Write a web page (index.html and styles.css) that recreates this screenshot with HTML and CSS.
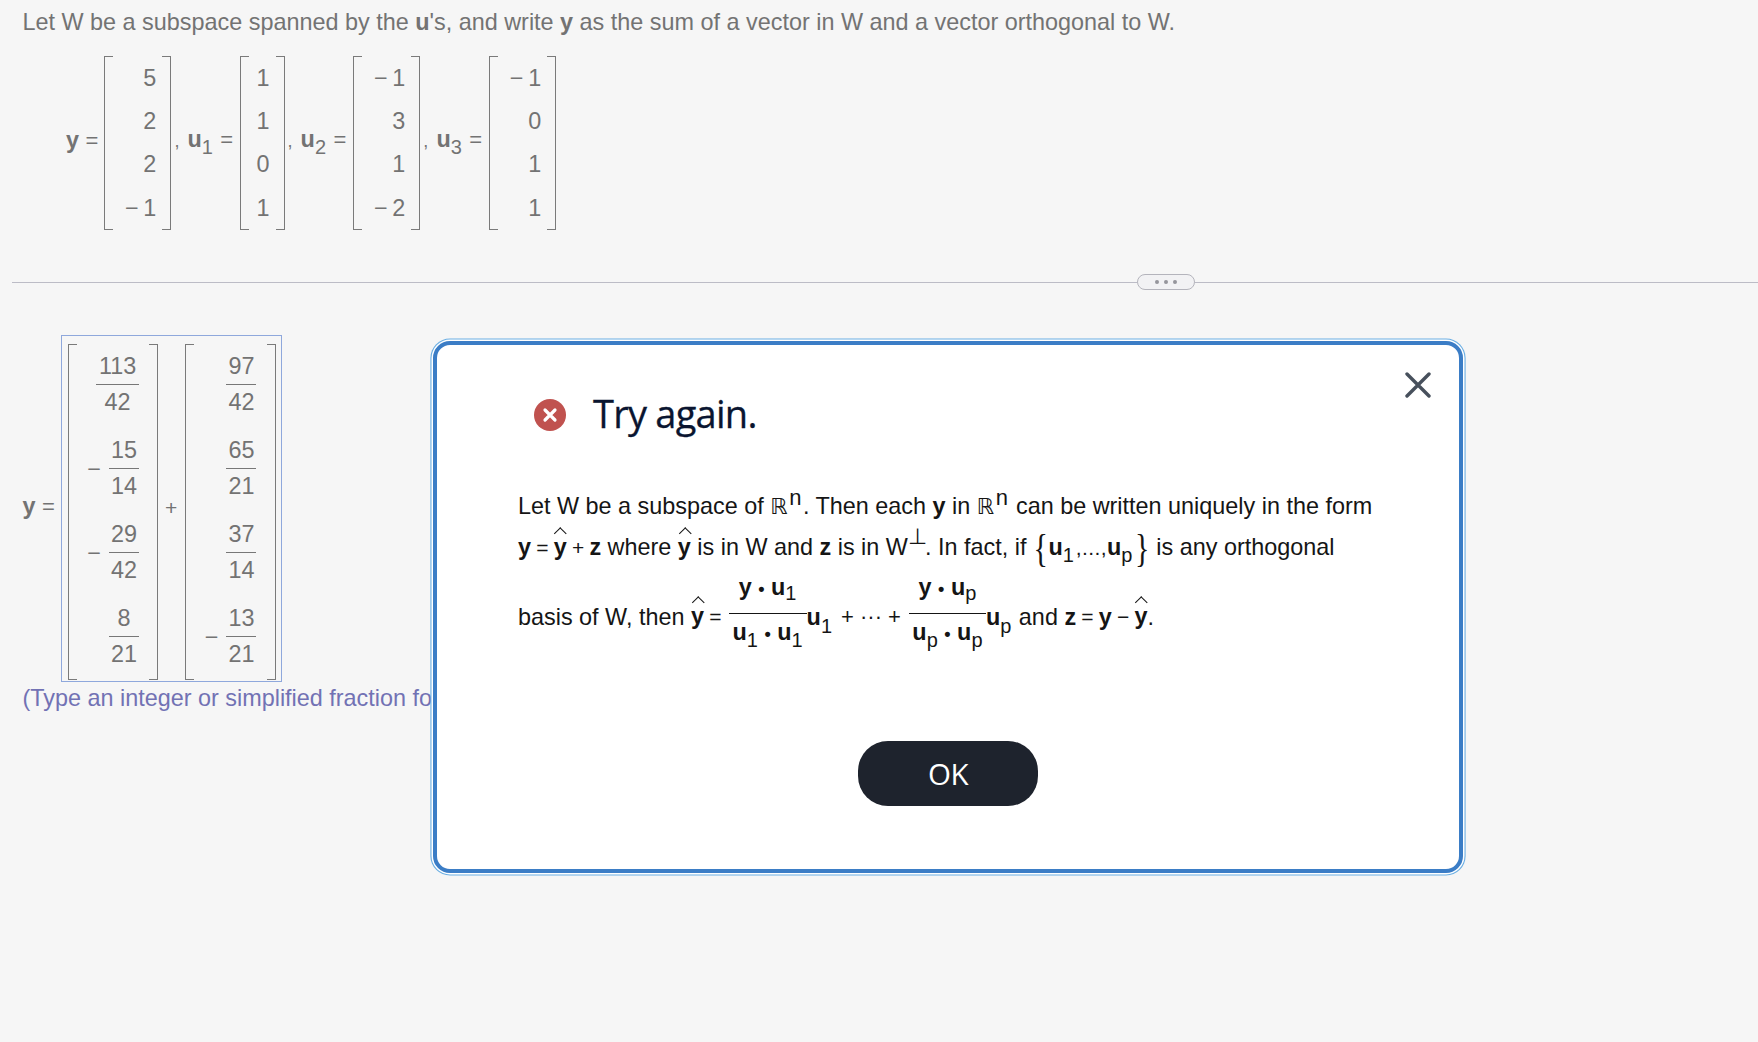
FILE: index.html
```html
<!DOCTYPE html>
<html lang="en">
<head>
<meta charset="utf-8">
<title>Try again</title>
<link rel="stylesheet" href="styles.css">
</head>
<body>
<main class="page">
  <p class="intro">Let W be a subspace spanned by the <b>u</b>'s, and write <b>y</b> as the sum of a vector in W and a vector orthogonal to W.</p>

  <div class="vectors">
    <span class="label lbl-y"><b>y</b> <span class="eq">=</span></span>
    <div class="matrix m-wide">
      <span>5</span><span>2</span><span>2</span><span>−&#8201;1</span>
    </div>
    <span class="label lbl-u"><span class="comma">,</span><span class="uvar"><b>u</b><span class="sub">1</span></span><span class="eq">=</span></span>
    <div class="matrix m-narrow">
      <span>1</span><span>1</span><span>0</span><span>1</span>
    </div>
    <span class="label lbl-u"><span class="comma">,</span><span class="uvar"><b>u</b><span class="sub">2</span></span><span class="eq">=</span></span>
    <div class="matrix m-wide">
      <span>−&#8201;1</span><span>3</span><span>1</span><span>−&#8201;2</span>
    </div>
    <span class="label lbl-u"><span class="comma">,</span><span class="uvar"><b>u</b><span class="sub">3</span></span><span class="eq">=</span></span>
    <div class="matrix m-wide">
      <span>−&#8201;1</span><span>0</span><span>1</span><span>1</span>
    </div>
  </div>

  <div class="rule">
    <span class="rule-line rule-left"></span>
    <span class="pill"><i></i><i></i><i></i></span>
    <span class="rule-line rule-right"></span>
  </div>

  <div class="answer">
    <span class="label answer-label"><b>y</b> <span class="eq">=</span></span>
    <div class="answer-box">
      <div class="fmatrix fm-a">
        <div class="frow"><span class="ffrac wide"><span>113</span><span>42</span></span></div>
        <div class="frow"><span class="fminus">−</span><span class="ffrac"><span>15</span><span>14</span></span></div>
        <div class="frow"><span class="fminus">−</span><span class="ffrac"><span>29</span><span>42</span></span></div>
        <div class="frow"><span class="ffrac"><span>8</span><span>21</span></span></div>
      </div>
      <span class="plus">+</span>
      <div class="fmatrix fm-b">
        <div class="frow"><span class="ffrac"><span>97</span><span>42</span></span></div>
        <div class="frow"><span class="ffrac"><span>65</span><span>21</span></span></div>
        <div class="frow"><span class="ffrac"><span>37</span><span>14</span></span></div>
        <div class="frow"><span class="fminus">−</span><span class="ffrac"><span>13</span><span>21</span></span></div>
      </div>
    </div>
  </div>

  <p class="hint">(Type an integer or simplified fraction for any non-integer numbers.)</p>
</main>

<section class="modal">
  <button class="close" aria-label="Close">
    <svg viewBox="0 0 26 26" width="26" height="26"><path d="M2 2 L24 24 M24 2 L2 24" fill="none" stroke="#47505c" stroke-width="3.4" stroke-linecap="round"/></svg>
  </button>
  <header class="modal-head">
    <svg class="err" viewBox="0 0 32 32" width="32" height="32"><circle cx="16" cy="16" r="16" fill="#c0524f"/><path d="M11 11 L21 21 M21 11 L11 21" fill="none" stroke="#fff" stroke-width="3.2" stroke-linecap="round"/></svg>
    <h1>Try again.</h1>
  </header>
  <div class="modal-body">
    <p class="line l1">Let W be a subspace of <span class="bb">ℝ</span><span class="sup">n</span>. Then each <b>y</b> in <span class="bb">ℝ</span><span class="sup">n</span> can be written uniquely in the form</p>
    <p class="line l2"><b>y</b> <span class="op">=</span> <b class="hat">y</b> <span class="op">+</span> <b>z</b> where <b class="hat">y</b> is in W and <b>z</b> is in W<span class="sup perp">⊥</span>. In fact, if <span class="brace">{</span><b>u</b><span class="sub gap">1</span><span class="tight">,...,</span><b>u</b><span class="sub gap">p</span><span class="brace">}</span> is any orthogonal</p>
    <div class="line l3">basis of W, then <b class="hat">y</b> <span class="op">=</span> <span class="frac"><span class="num"><b>y</b> <b class="dot">•</b> <b>u</b><span class="sub">1</span></span><span class="den"><b>u</b><span class="sub">1</span> <b class="dot">•</b> <b>u</b><span class="sub">1</span></span></span><b>u</b><span class="sub low">1</span> <span class="sum">+ ··· +</span> <span class="frac f2"><span class="num"><b>y</b> <b class="dot">•</b> <b>u</b><span class="sub">p</span></span><span class="den"><b>u</b><span class="sub">p</span> <b class="dot">•</b> <b>u</b><span class="sub">p</span></span></span><b>u</b><span class="sub low">p</span> and <b>z</b> <span class="op">=</span> <b>y</b> <span class="op">−</span> <b class="hat">y</b>.</div>
  </div>
  <div class="modal-foot"><button class="ok">OK</button></div>
</section>
</body>
</html>
```
FILE: styles.css
```css
* { box-sizing: border-box; }
html, body { margin: 0; padding: 0; }
body {
  width: 1758px;
  height: 1042px;
  overflow: hidden;
  position: relative;
  background: #f6f6f6;
  color: #737373;
  font-family: "Liberation Sans", "DejaVu Sans", sans-serif;
  font-size: 23.4px;
  line-height: 26px;
}
.page { display: flex; flex-direction: column; }
p { margin: 0; }

.intro { padding: 9px 0 0 22.5px; }

.eq { font-size: 22px; }
.sub { font-size: 20px; line-height: 0; vertical-align: -7px; }
.comma { font-size: 18px; }
.label { white-space: pre; }

.vectors { display: flex; align-items: center; margin-top: 21px; padding-left: 66px; }
.lbl-y { margin: 0 6px 6px 0; }
.lbl-u { display: flex; align-items: baseline; width: 68.8px; margin-bottom: 6px; padding: 0 7px 0 3px; }
.lbl-u .uvar { margin-left: 8px; }
.lbl-u .eq { margin-left: auto; }

.matrix {
  position: relative;
  display: grid;
  grid-auto-rows: 43.3px;
  height: 174px;
  justify-items: end;
  align-items: center;
  padding-right: 15px;
}
.m-wide { width: 67px; }
.m-narrow { width: 44.4px; padding-right: 15px; }
.matrix::before, .matrix::after,
.fmatrix::before, .fmatrix::after {
  content: "";
  position: absolute;
  top: 0;
  bottom: 0;
  width: 8px;
  border: 1.4px solid #7a7a7a;
}
.matrix::before, .fmatrix::before { left: 0; border-right: 0; }
.matrix::after, .fmatrix::after { right: 0; border-left: 0; }

.rule { display: flex; align-items: center; height: 16px; margin: 44px 0 0 12px; }
.rule-line { height: 1px; background: #bcbcc6; }
.rule-left { width: 1125px; }
.rule-right { flex: 1; }
.pill {
  display: flex;
  align-items: center;
  justify-content: center;
  gap: 5.4px;
  width: 58px;
  height: 16px;
  border: 1px solid #b4b4bc;
  border-radius: 8px;
  background: #f2f2f4;
}
.pill i { width: 3.8px; height: 3.8px; border-radius: 50%; background: #96969c; }

.answer { display: flex; align-items: flex-start; margin-top: 45px; padding-left: 22.5px; }
.answer-label { margin: 158px 0 0 0; width: 38px; }
.answer-box {
  display: flex;
  align-items: center;
  width: 221.5px;
  height: 347px;
  padding: 6px 5px 0 6px;
  border: 1px solid #8fa8dc;
}
.fmatrix { position: relative; display: grid; grid-auto-rows: 84px; height: 336px; flex: none; }
.fm-a { width: 90px; padding-right: 18.6px; }
.fm-b { width: 90.7px; padding-right: 19.3px; }
.plus { width: 27.5px; text-align: center; font-size: 21px; margin-top: -8px; }
.frow { display: flex; align-items: center; justify-content: flex-end; }
.fminus { margin-right: 8px; line-height: 1; }
.ffrac { display: flex; flex-direction: column; align-items: center; width: 30px; margin-top: -3px; }
.ffrac.wide { width: 42.7px; }
.ffrac span { height: 36px; line-height: 36px; }
.ffrac span:last-child { width: 100%; text-align: center; line-height: 34px; border-top: 1px solid #777; }

.hint { margin-top: 3px; padding-left: 22.5px; color: #7272b4; white-space: nowrap; }

.modal {
  position: absolute;
  left: 433px;
  top: 341px;
  width: 1030px;
  height: 532px;
  padding-top: 54px;
  background: #fff;
  color: #151515;
  border: 4px solid #3b7dc6;
  border-radius: 17px;
  box-shadow: 0 0 0 1.5px #fff, 0 0 0 2.6px #6aaee3;
}
.close {
  position: absolute;
  top: 27px;
  right: 28px;
  padding: 0;
  border: 0;
  background: none;
  line-height: 0;
}
.modal-head { display: flex; align-items: center; gap: 27px; height: 32px; margin-left: 97px; }
.modal-head h1 {
  margin: -4px 0 0;
  font: 400 38px/32px "Open Sans", sans-serif;
  letter-spacing: -0.75px;
  color: #0a1530;
  -webkit-text-stroke: 0.3px #0a1530;
}

.modal-body { margin: 62px 0 0 81px; }
.line { white-space: nowrap; }
.l2 { margin-top: 14px; }
.l3 { margin-top: 12.5px; }
.bb { font-size: 22px; }
.sup { font-size: 22px; line-height: 0; vertical-align: 9px; margin: 0 1.5px; }
.perp { vertical-align: 11px; margin: 0 -2px 0 0; }
.op { font-size: 21px; margin: 0 -1.3px; }
.tight { letter-spacing: 0.4px; font-size: 21px; }
.gap { margin-right: 2px; }
.brace {
  display: inline-block;
  margin: 0 0.5px;
  font-family: "Liberation Serif", serif;
  font-size: 30px;
  line-height: 0;
  vertical-align: -3px;
  font-weight: 400;
  transform: scaleY(1.35);
}
.hat { position: relative; display: inline-block; }
.hat::before {
  content: "";
  position: absolute;
  left: calc(50% - 3.75px);
  top: -5px;
  width: 7.5px;
  height: 7.5px;
  border-top: 1.4px solid #151515;
  border-left: 1.4px solid #151515;
  transform: rotate(45deg);
}
.frac { display: inline-block; vertical-align: -15.3px; width: 78px; text-align: center; margin-left: 2px; }
.f2 { width: 77px; margin-left: 0; }
.num { display: block; height: 39px; padding-bottom: 13px; }
.den { display: block; height: 32px; padding-top: 5px; border-top: 1px solid #151515; }
.frac .sub { vertical-align: -5px; }
.den .sub { vertical-align: -6.5px; }
.dot { font-size: 18px; }
.low { vertical-align: -9px; margin-right: 1px; }
.sum { font-size: 22px; margin: 0 1.5px; }

.modal-foot { display: flex; justify-content: center; margin-top: 96px; }
.ok {
  width: 180px;
  height: 65px;
  padding: 0;
  border: 0;
  border-radius: 30px;
  background: #1e232d;
  color: #fff;
  font: 400 29.5px/63px "Open Sans", sans-serif;
  letter-spacing: -0.5px;
}
```
